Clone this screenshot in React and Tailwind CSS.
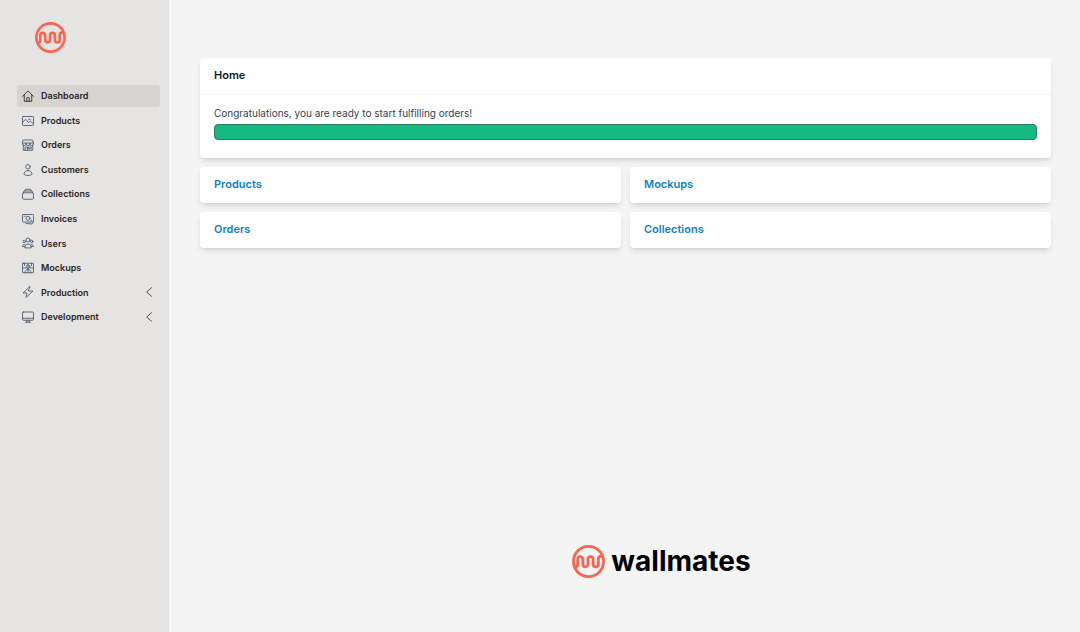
import clsx from 'clsx';

const HouseIcon = () => (
  <>
    <path d="M1.5 12.5 10.6 3a2 2 0 0 1 2.8 0l9.1 9.5" />
    <path d="M4.5 10v12.5h15V10" />
    <path d="M9.5 22.5V16a1 1 0 0 1 1-1h3a1 1 0 0 1 1 1v6.5" />
  </>
);

const PictureIcon = () => (
  <>
    <rect x="1" y="3" width="22" height="18" rx="1.5" />
    <path d="m1 15 5-5.5a1.5 1.5 0 0 1 2.3 0l4.7 5.5 2.5-2a1.5 1.5 0 0 1 2 0L23 18" />
    <path d="M13 9.5c1-2 3-2 4 0" />
  </>
);

const ShopIcon = () => (
  <>
    <path d="M3 2h18l2 6H1z" />
    <path d="M1 8v1.5a3.6 3.6 0 0 0 7.3 0V8v1.5a3.6 3.6 0 0 0 7.4 0V8v1.5a3.6 3.6 0 0 0 7.3 0V8" />
    <path d="M2.5 12.500v10h19v-10M6 22.500V16h5v6.500M14 16h4.500v3.500H14z" />
  </>
);

const PersonIcon = () => (
  <>
    <circle cx="12" cy="5.5" r="4.5" />
    <path d="M12 13c-4.600 0-8 3.400-8 7.500 1.500 1.300 4.500 2.500 8 2.500s6.500-1.200 8-2.500c0-4.100-3.400-7.500-8-7.500z" />
  </>
);

const StackIcon = () => (
  <>
    <rect x="1" y="9.5" width="22" height="13" rx="2.5" />
    <path d="M3 9.500V8a2 2 0 0 1 2-2h14a2 2 0 0 1 2 2v1.500" />
    <path d="M6 6V4.500a2 2 0 0 1 2-2h8a2 2 0 0 1 2 2V6" />
  </>
);

const CashIcon = () => (
  <>
    <rect x="1" y="3" width="22" height="15" rx="1.5" />
    <circle cx="12" cy="10.5" r="4" />
    <path d="M4.500 6.500H6M18 14.500h1.500" />
    <path d="m8 21 12 1 2.500-4" />
  </>
);

const GroupIcon = () => (
  <>
    <circle cx="12" cy="6" r="4" />
    <circle cx="4.5" cy="9" r="2.5" />
    <circle cx="19.5" cy="9" r="2.5" />
    <path d="M5.500 21c0-4 2.500-7 6.500-7s6.500 3 6.500 7z" />
    <path d="M6.500 15.500C4 14 1 15.500 1 19h4.500M17.500 15.500C20 14 23 15.500 23 19h-4.500" />
  </>
);

const FrameIcon = () => (
  <>
    <rect x="1" y="2.5" width="22" height="19" rx="1" />
    <circle cx="12" cy="9" r="3.5" />
    <path d="M12 5.500v16M6 21.500c0-4 2.500-6.500 6-6.500s6 2.500 6 6.500M1 12h7M16 12h7M5 2.500V7M19 2.500V7" />
  </>
);

const BoltIcon = () => <path d="M15.500 1 2 14h8l-2 9 14-13h-8.500z" />;

const MonitorIcon = () => (
  <>
    <rect x="1" y="2" width="22" height="16.5" rx="2" />
    <path d="M1 14.500h22M9.500 18.500v4M14.500 18.500v4M7 22.500h10" />
  </>
);

const menu = [
  { label: 'Dashboard', icon: HouseIcon, active: true },
  { label: 'Products', icon: PictureIcon },
  { label: 'Orders', icon: ShopIcon },
  { label: 'Customers', icon: PersonIcon },
  { label: 'Collections', icon: StackIcon },
  { label: 'Invoices', icon: CashIcon },
  { label: 'Users', icon: GroupIcon },
  { label: 'Mockups', icon: FrameIcon },
  { label: 'Production', icon: BoltIcon, group: true },
  { label: 'Development', icon: MonitorIcon, group: true },
];

const shortcuts = ['Products', 'Mockups', 'Orders', 'Collections'];

const LogoMark = ({ className }) => (
  <svg viewBox="0 0 32 32" className={className} fill="none" stroke="currentColor" strokeWidth="2.7" strokeLinecap="round" aria-hidden="true">
    <circle cx="16" cy="16" r="14.6" />
    <path d="M3 21.500c1.800 0 2.500-1 2.500-2.800v-5a2.500 2.500 0 0 1 5 0v5a2.500 2.500 0 0 0 5 0v-5a2.500 2.500 0 0 1 5 0v5a2.500 2.500 0 0 0 5 0v-5c0-1.800 1-3 3-3" />
  </svg>
);

const MenuItem = ({ item }) => {
  const Icon = item.icon;
  const classes = clsx(
    'flex h-[22px] w-full items-center gap-[7px] rounded-[3px] px-[5px] text-left text-[9px] font-semibold text-stone-800',
    item.active && 'bg-[#d7d3d0]'
  );
  const content = (
    <>
      <svg
        viewBox="0 0 24 24"
        className={clsx('size-3 shrink-0', item.active ? 'text-stone-800' : 'text-slate-600')}
        fill="none"
        stroke="currentColor"
        strokeWidth="1.7"
        strokeLinecap="round"
        strokeLinejoin="round"
        aria-hidden="true"
      >
        <Icon />
      </svg>
      <span className="flex-1">{item.label}</span>
      {item.group && (
        <svg viewBox="0 0 6 10" className="mr-[3px] h-[10px] w-[6px] text-stone-600" fill="none" stroke="currentColor" strokeLinecap="round" strokeLinejoin="round" aria-hidden="true">
          <path d="M5.500.7.700 5l4.800 4.300" />
        </svg>
      )}
    </>
  );

  if (item.group) {
    return (
      <button type="button" aria-expanded="false" className={classes}>
        {content}
      </button>
    );
  }

  return (
    <a href="#" aria-current={item.active ? 'page' : undefined} className={classes}>
      {content}
    </a>
  );
};

const Sidebar = () => (
  <aside className="w-[169px] shrink-0 bg-[#e6e4e2] px-[9px] pt-[22px]">
    <a href="#" aria-label="Wallmates" className="ml-[26px] block w-8 text-[#fa6450]">
      <LogoMark className="size-[31px]" />
    </a>
    <nav className="mt-8 pl-2">
      <ul className="flex h-[243px] flex-col justify-between">
        {menu.map((item) => (
          <li key={item.label}>
            <MenuItem item={item} />
          </li>
        ))}
      </ul>
    </nav>
  </aside>
);

const App = () => {
  return (
    <div className="flex min-h-screen bg-[#f4f4f4] font-['Inter',sans-serif]">
      <Sidebar />
      <main className="flex flex-1 flex-col pt-[58px] pr-[29px] pl-[31px]">
        <section className="rounded bg-white shadow-md">
          <h1 className="border-b border-gray-100 px-[14px] pt-2 pb-[10px] text-[11px] leading-[18px] font-semibold text-gray-900">
            Home
          </h1>
          <div className="px-[14px] pt-[9px] pb-[18px]">
            <p className="text-[10px] leading-[18px] text-gray-700">
              Congratulations, you are ready to start fulfilling orders!
            </p>
            <div
              role="progressbar"
              aria-label="Setup progress"
              aria-valuenow={100}
              className="mt-[2px] h-4 rounded border border-[#2c7a5c] bg-[#14b981]"
            />
          </div>
        </section>

        <div className="mt-[9px] grid grid-cols-2 gap-[9px]">
          {shortcuts.map((name) => (
            <a
              key={name}
              href="#"
              className="rounded bg-white px-[14px] pt-2 pb-[10px] text-[11px] leading-[18px] font-semibold text-[#0b83c5] shadow-md"
            >
              {name}
            </a>
          ))}
        </div>

        <footer className="mt-auto flex items-center justify-center gap-[6px] pb-[54px] pl-[72px]">
          <LogoMark className="size-[33px] text-[#fa6450]" />
          <span className="text-[28px] leading-[34px] font-bold text-black">wallmates</span>
        </footer>
      </main>
    </div>
  );
};

export default App;
